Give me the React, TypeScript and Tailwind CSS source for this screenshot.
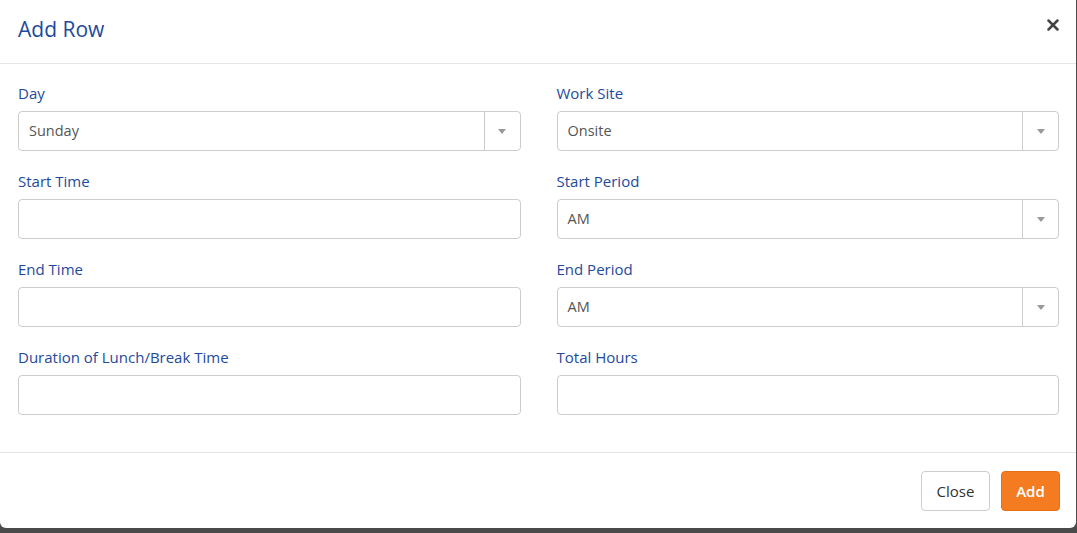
import { X } from "lucide-react";

const fields = [
  { label: "Day", kind: "select", value: "Sunday" },
  { label: "Work Site", kind: "select", value: "Onsite" },
  { label: "Start Time", kind: "input" },
  { label: "Start Period", kind: "select", value: "AM" },
  { label: "End Time", kind: "input" },
  { label: "End Period", kind: "select", value: "AM" },
  { label: "Duration of Lunch/Break Time", kind: "input" },
  { label: "Total Hours", kind: "input" },
];

function SelectBox({ value }: { value?: string }) {
  return (
    <div className="h-[40px] flex items-stretch border border-[#cccccc] rounded-[4px] bg-white">
      <div className="flex-1 flex items-center pl-[10px] text-[14.5px] text-[#555555]">{value}</div>
      <div className="w-[36px] border-l border-[#cccccc] flex items-center justify-center">
        <span className="block w-0 h-0 border-l-[4px] border-r-[4px] border-t-[5px] border-l-transparent border-r-transparent border-t-[#999999]" />
      </div>
    </div>
  );
}

export default function App() {
  return (
    <div className="h-[533px] w-full bg-[#4a4a4a] overflow-hidden font-['Open_Sans',sans-serif]">
      <div className="h-[528px] w-[1076px] bg-white rounded-b-[6px] flex flex-col">
        <header className="h-[64px] border-b border-[#e5e5e5] flex items-start justify-between pl-[18px] pr-[14px] pt-[16px]">
          <h1 className="text-[21px] leading-[26px] text-[#1e4a9c]">Add Row</h1>
          <X className="w-[18px] h-[18px] text-[#444444] mt-[0px]" strokeWidth={3.4} />
        </header>

        <main className="grid grid-cols-2 gap-x-[36px] gap-y-[20px] pl-[18px] pr-[17px] pt-[19px] pb-[37px] border-b border-[#e5e5e5]">
          {fields.map((f) => (
            <div key={f.label}>
              <label className="block text-[15px] leading-[20px] text-[#1e4a9c] mb-[8px]">{f.label}</label>
              {f.kind === "select" ? (
                <SelectBox value={f.value} />
              ) : (
                <div className="h-[40px] border border-[#cccccc] rounded-[4px] bg-white" />
              )}
            </div>
          ))}
        </main>

        <footer className="flex justify-end items-center gap-[11px] pr-[16px] pt-[18px]">
          <button className="h-[40px] w-[69px] border border-[#cccccc] rounded-[4px] bg-white text-[15px] text-[#333333]">
            Close
          </button>
          <button className="h-[40px] w-[59px] border border-[#e86f15] rounded-[4px] bg-[#f47b20] text-[15px] font-semibold text-white">
            Add
          </button>
        </footer>
      </div>
    </div>
  );
}
